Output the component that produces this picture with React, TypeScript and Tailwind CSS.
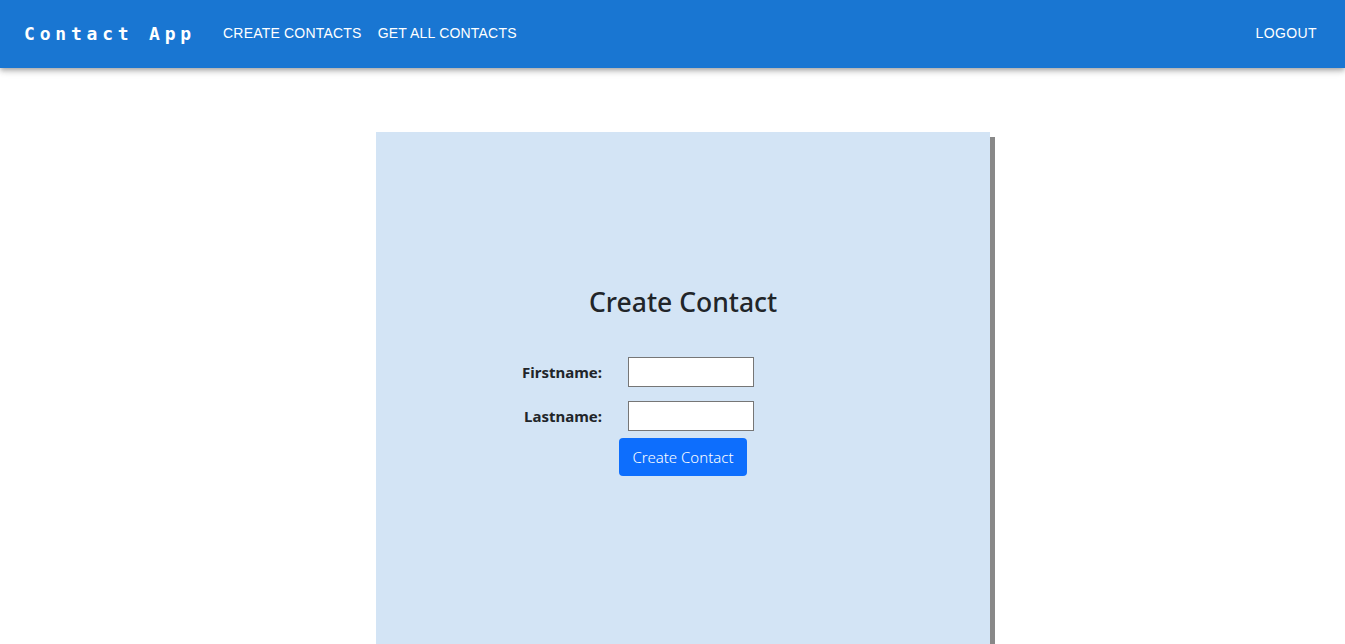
export default function App() {
  return (
    <div className="min-h-[644px] bg-white font-['Noto_Sans',sans-serif]">
      {/* App bar */}
      <header className="flex h-[68px] items-center bg-[#1976d2] px-6 pb-[2px] text-white shadow-[0_2px_4px_-1px_rgba(0,0,0,0.2),0_4px_5px_0_rgba(0,0,0,0.14),0_1px_10px_0_rgba(0,0,0,0.12)]">
        <span className="mr-[27px] font-['DejaVu_Sans_Mono',monospace] text-[18px] font-bold tracking-[0.3rem]">
          Contact App
        </span>
        <nav className="flex gap-[16px] font-['Liberation_Sans',sans-serif] text-[14px] tracking-[0.2px]">
          <a>CREATE CONTACTS</a>
          <a>GET ALL CONTACTS</a>
        </nav>
        <a className="ml-auto mr-[4px] font-['Liberation_Sans',sans-serif] text-[14px] tracking-[0.4px]">
          LOGOUT
        </a>
      </header>

      {/* Card */}
      <main className="pt-[64px]">
        <div className="ml-[376px] h-[560px] w-[614px] bg-[#d3e4f5] shadow-[5px_5px_0_#888]">
          <h1 className="pt-[151px] pl-[213px] text-[26.5px] font-medium text-[#212529]">
            Create Contact
          </h1>
          <form className="mt-[34px] pl-[146px]">
            <div className="flex items-center gap-[26px]">
              <label className="w-[80px] text-right text-[15px] font-bold text-[#212529]">
                Firstname:
              </label>
              <input className="h-[30px] w-[126px] border border-[#767676] bg-white" />
            </div>
            <div className="mt-[14px] flex items-center gap-[26px]">
              <label className="w-[80px] text-right text-[15px] font-bold text-[#212529]">
                Lastname:
              </label>
              <input className="h-[30px] w-[126px] border border-[#767676] bg-white" />
            </div>
            <button
              type="button"
              className="mt-[7px] ml-[97px] h-[38px] w-[128px] rounded-[4px] bg-[#0d6efd] text-[15px] font-light text-white"
            >
              Create Contact
            </button>
          </form>
        </div>
      </main>
    </div>
  );
}
